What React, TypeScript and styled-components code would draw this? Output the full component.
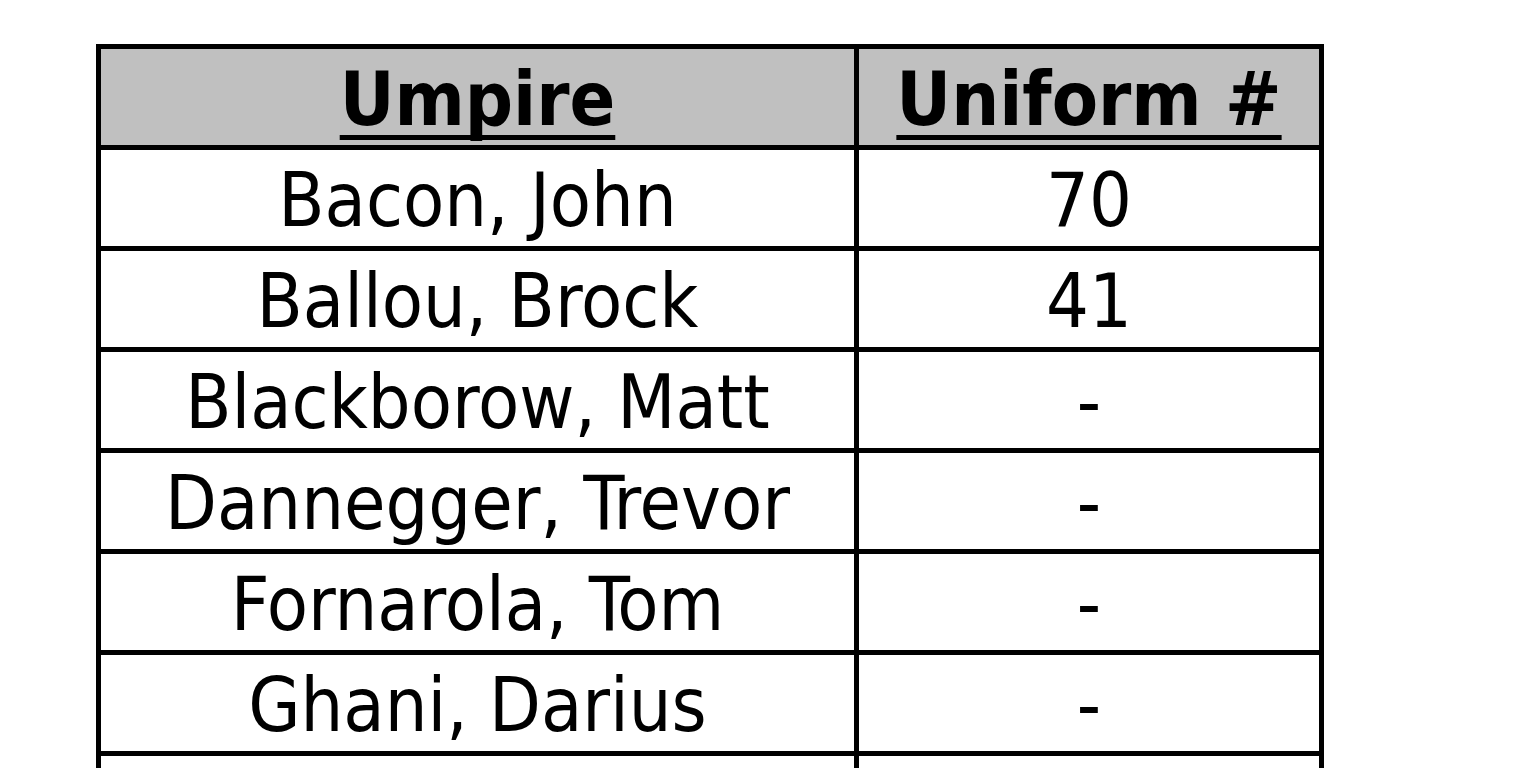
import React from "react";
import styled, {createGlobalStyle} from "styled-components";

const GlobalStyle = createGlobalStyle`
html, body {
    margin: 0;
    padding: 0;
    background: #ffffff;
}
body {
    font-family: "DejaVu Sans Condensed", "DejaVu Sans", "Liberation Sans", sans-serif;
    font-stretch: condensed;
    color: #000000;
    overflow: hidden;
}
`

const Page = styled.div`
    padding: 44px 0 0 96px;
    height: 768px;
    box-sizing: border-box;
`

const Table = styled.table`
    border-collapse: collapse;
    table-layout: fixed;
    width: 1228px;
    font-size: 75px;
    line-height: 1;
`

const HeadCell = styled.th<{ $width: number }>`
    width: ${p => p.$width}px;
    height: 91px;
    padding: 5px 0 0;
    border: 5px solid #000;
    background: #c0c0c0;
    font-weight: bold;
    text-align: center;
    vertical-align: middle;
    text-decoration: underline;
    text-decoration-thickness: 5px;
    text-underline-offset: 10px;
    text-decoration-skip-ink: none;
`

const Cell = styled.td`
    height: 91px;
    padding: 5px 0 0;
    border: 5px solid #000;
    text-align: center;
    vertical-align: middle;
    white-space: nowrap;
`

const umpires = [
    {name: "Bacon, John", number: "70"},
    {name: "Ballou, Brock", number: "41"},
    {name: "Blackborow, Matt", number: "-"},
    {name: "Dannegger, Trevor", number: "-"},
    {name: "Fornarola, Tom", number: "-"},
    {name: "Ghani, Darius", number: "-"},
    {name: "", number: ""},
]

const App = () => {
    return (<Page>
        <GlobalStyle/>
        <Table>
            <thead>
            <tr>
                <HeadCell $width={753}>Umpire</HeadCell>
                <HeadCell $width={460}>Uniform #</HeadCell>
            </tr>
            </thead>
            <tbody>
            {umpires.map((u, i) => (
                <tr key={i}>
                    <Cell>{u.name}</Cell>
                    <Cell>{u.number}</Cell>
                </tr>
            ))}
            </tbody>
        </Table>
    </Page>)
}

export default App
